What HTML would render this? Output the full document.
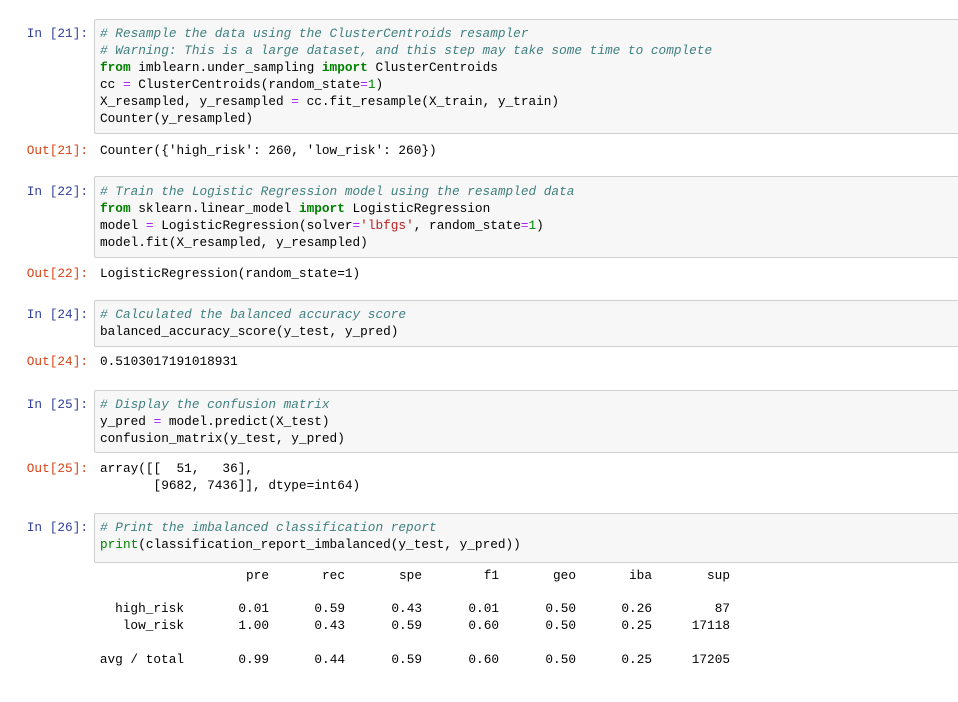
<!DOCTYPE html>
<html><head><meta charset="utf-8"><style>
body{margin:0;width:958px;height:702px;background:#fff;position:relative;overflow:hidden;font-family:"Liberation Mono","DejaVu Sans Mono",monospace;font-size:12.75px;color:#000}
.box{position:absolute;left:94px;right:-5px;background:#f7f7f7;border:1px solid #cfcfcf;border-radius:2px}
.l{position:absolute;left:100px;height:17px;line-height:17px;white-space:pre}
.p{position:absolute;right:870px;height:17px;line-height:17px;white-space:pre;text-align:right}
.in{color:#303f9f}.out{color:#d84315}
.c{color:#408080;font-style:italic}.k{color:#008000;font-weight:bold}.o{color:#aa22ff}.n{color:#080}.s{color:#ba2121}.b{color:#008000}
.t{position:absolute;height:17px;line-height:17px;white-space:pre;text-align:right}
</style></head><body>
<div class="box" style="top:19px;height:113px"></div>
<div class="p in" style="top:25px">In [21]:</div>
<div class="l" style="top:25px"><span class="c"># Resample the data using the ClusterCentroids resampler</span></div>
<div class="l" style="top:42px"><span class="c"># Warning: This is a large dataset, and this step may take some time to complete</span></div>
<div class="l" style="top:59px"><span class="k">from</span> imblearn.under_sampling <span class="k">import</span> ClusterCentroids</div>
<div class="l" style="top:76px">cc <span class="o">=</span> ClusterCentroids(random_state<span class="o">=</span><span class="n">1</span>)</div>
<div class="l" style="top:93px">X_resampled, y_resampled <span class="o">=</span> cc.fit_resample(X_train, y_train)</div>
<div class="l" style="top:110px">Counter(y_resampled)</div>
<div class="p out" style="top:142px">Out[21]:</div>
<div class="l" style="top:142px">Counter({'high_risk': 260, 'low_risk': 260})</div>

<div class="box" style="top:176px;height:80px"></div>
<div class="p in" style="top:183px">In [22]:</div>
<div class="l" style="top:183px"><span class="c"># Train the Logistic Regression model using the resampled data</span></div>
<div class="l" style="top:200px"><span class="k">from</span> sklearn.linear_model <span class="k">import</span> LogisticRegression</div>
<div class="l" style="top:217px">model <span class="o">=</span> LogisticRegression(solver<span class="o">=</span><span class="s">'lbfgs'</span>, random_state<span class="o">=</span><span class="n">1</span>)</div>
<div class="l" style="top:234px">model.fit(X_resampled, y_resampled)</div>
<div class="p out" style="top:265px">Out[22]:</div>
<div class="l" style="top:265px">LogisticRegression(random_state=1)</div>

<div class="box" style="top:300px;height:45px"></div>
<div class="p in" style="top:306px">In [24]:</div>
<div class="l" style="top:306px"><span class="c"># Calculated the balanced accuracy score</span></div>
<div class="l" style="top:323px">balanced_accuracy_score(y_test, y_pred)</div>
<div class="p out" style="top:353px">Out[24]:</div>
<div class="l" style="top:353px">0.5103017191018931</div>

<div class="box" style="top:390px;height:61px"></div>
<div class="p in" style="top:396px">In [25]:</div>
<div class="l" style="top:396px"><span class="c"># Display the confusion matrix</span></div>
<div class="l" style="top:413px">y_pred <span class="o">=</span> model.predict(X_test)</div>
<div class="l" style="top:430px">confusion_matrix(y_test, y_pred)</div>
<div class="p out" style="top:460px">Out[25]:</div>
<div class="l" style="top:460px">array([[  51,   36],</div>
<div class="l" style="top:477px">       [9682, 7436]], dtype=int64)</div>

<div class="box" style="top:513px;height:48px"></div>
<div class="p in" style="top:519px">In [26]:</div>
<div class="l" style="top:519px"><span class="c"># Print the imbalanced classification report</span></div>
<div class="l" style="top:536px"><span class="b">print</span>(classification_report_imbalanced(y_test, y_pred))</div>

<div class="t" style="top:567px;right:689px">pre</div><div class="t" style="top:567px;right:613px">rec</div><div class="t" style="top:567px;right:536px">spe</div><div class="t" style="top:567px;right:459px">f1</div><div class="t" style="top:567px;right:382px">geo</div><div class="t" style="top:567px;right:306px">iba</div><div class="t" style="top:567px;right:228px">sup</div>

<div class="t" style="top:600px;right:774px">high_risk</div><div class="t" style="top:600px;right:689px">0.01</div><div class="t" style="top:600px;right:613px">0.59</div><div class="t" style="top:600px;right:536px">0.43</div><div class="t" style="top:600px;right:459px">0.01</div><div class="t" style="top:600px;right:382px">0.50</div><div class="t" style="top:600px;right:306px">0.26</div><div class="t" style="top:600px;right:228px">87</div>

<div class="t" style="top:617px;right:774px">low_risk</div><div class="t" style="top:617px;right:689px">1.00</div><div class="t" style="top:617px;right:613px">0.43</div><div class="t" style="top:617px;right:536px">0.59</div><div class="t" style="top:617px;right:459px">0.60</div><div class="t" style="top:617px;right:382px">0.50</div><div class="t" style="top:617px;right:306px">0.25</div><div class="t" style="top:617px;right:228px">17118</div>

<div class="t" style="top:651px;right:774px">avg / total</div><div class="t" style="top:651px;right:689px">0.99</div><div class="t" style="top:651px;right:613px">0.44</div><div class="t" style="top:651px;right:536px">0.59</div><div class="t" style="top:651px;right:459px">0.60</div><div class="t" style="top:651px;right:382px">0.50</div><div class="t" style="top:651px;right:306px">0.25</div><div class="t" style="top:651px;right:228px">17205</div>
</body></html>
